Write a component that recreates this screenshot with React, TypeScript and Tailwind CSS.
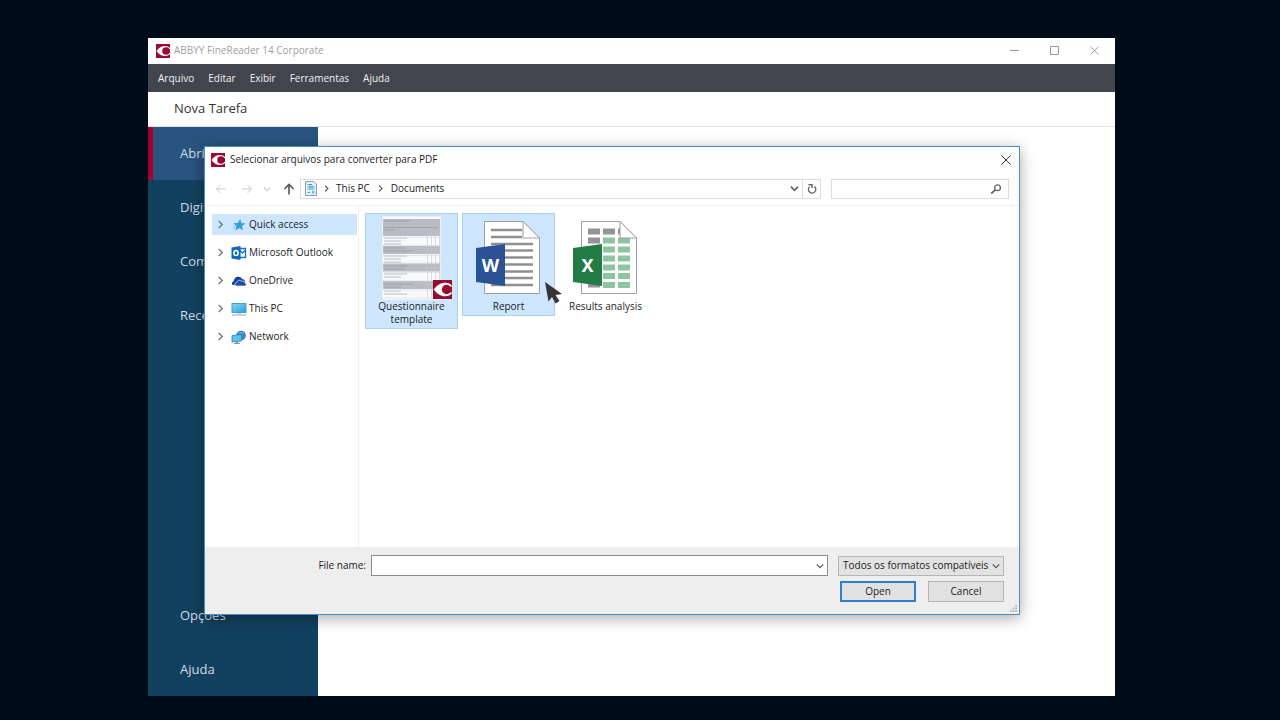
import type { ReactNode } from 'react';

function Logo({ className }: { className: string }) {
  return (
    <svg viewBox="0 0 28 28" className={className} aria-hidden="true">
      <rect width="28" height="28" fill="#980a30" />
      <path d="M1 14C6 7.500 11 4 18 4C22.500 4 25.500 5.500 28 8V20C25.500 22.500 22.500 24 18 24C11 24 6 20.500 1 14Z" fill="#fff" />
      <circle cx="20" cy="14" r="7.500" fill="#980a30" />
      <rect x="22" y="10" width="6" height="8" fill="#980a30" />
    </svg>
  );
}

function Chevron({ className, dir = 'right' }: { className: string; dir?: 'right' | 'down' }) {
  return (
    <svg viewBox="0 0 10 10" className={className} fill="none" stroke="currentColor" strokeWidth="1.500" aria-hidden="true">
      <path d={dir === 'right' ? 'M3 1L7 5L3 9' : 'M1 3L5 7L9 3'} />
    </svg>
  );
}

function Close({ className }: { className: string }) {
  return (
    <svg viewBox="0 0 10 10" className={className} fill="none" stroke="currentColor" aria-hidden="true">
      <path d="M0.500 0.500L9.500 9.500M9.500 0.500L0.500 9.500" />
    </svg>
  );
}

const icon = 'h-4 w-4 shrink-0';

const StarIcon = () => (
  <svg viewBox="0 0 16 16" className={icon} aria-hidden="true">
    <path d="M9.200 2L10.300 6L14.500 6.500L11 9L11.800 13.200L8.300 10.900L4.300 13.400L5.500 9.200L2.500 6.300L6.700 6Z" fill="#2f9fe0" />
    <path d="M2.500 9H5L4.500 10H2.500ZM2.500 11H4.200L3.800 12H2.500Z" fill="#7fc4ee" />
  </svg>
);

const OutlookIcon = () => (
  <svg viewBox="0 0 16 16" className={icon} aria-hidden="true">
    <path d="M8.500 3.500H14.500V12.500H8.500Z" fill="#fff" stroke="#1873c4" strokeWidth="1.400" />
    <path d="M8.500 5L11.500 8L14.500 5" fill="none" stroke="#1873c4" strokeWidth="1.400" />
    <path d="M0.500 2.500L9.500 1V15L0.500 13.500Z" fill="#1168b8" />
    <ellipse cx="5" cy="8" rx="2.100" ry="2.600" fill="none" stroke="#fff" strokeWidth="1.500" />
  </svg>
);

const OneDriveIcon = () => (
  <svg viewBox="0 0 16 16" className={icon} aria-hidden="true">
    <path d="M2 12C0.500 11.500 0.500 8.800 2.800 8.300C2.800 5.500 5 3.500 7.700 3.800C9.500 3.800 10.500 5 11 6C13 6 14 7 14 9V12Z" fill="#173f92" />
    <path d="M5.300 13C3.500 12.500 3.500 10 5.700 9.700C5.900 7.300 9.200 6.300 10.800 8.300C12.700 7.700 14 8.700 14 10C15.800 10.400 15.500 12.700 14.300 13Z" fill="#1a4aa8" stroke="#fff" strokeWidth="0.700" />
  </svg>
);

const PcIcon = () => (
  <svg viewBox="0 0 16 16" className={icon} aria-hidden="true">
    <defs>
      <linearGradient id="screen" x1="0" y1="0" x2="1" y2="1">
        <stop offset="0" stopColor="#8ad5f5" />
        <stop offset="1" stopColor="#2b9ddc" />
      </linearGradient>
    </defs>
    <rect x="1" y="2.500" width="14" height="9" fill="url(#screen)" stroke="#4b9cc8" />
    <path d="M6 12H10V13H6Z" fill="#c4d3dc" />
    <path d="M1 13.500H15V14.500H1Z" fill="#91a7b5" />
  </svg>
);

const NetworkIcon = () => (
  <svg viewBox="0 0 16 16" className={icon} aria-hidden="true">
    <circle cx="10" cy="6.500" r="4.800" fill="#2d7fb8" />
    <path d="M10 3L15 7L10 12Z" fill="#3c86b5" />
    <path d="M7 3.500C9 4.500 11 3 13 4.500" stroke="#84c3e6" fill="none" />
    <path d="M1 6.500L10.500 5.500V12L1 13Z" fill="#5fc0ee" stroke="#2d83b4" strokeWidth="0.800" />
    <path d="M5 13H7V14H5ZM3 14H9V15H3Z" fill="#7d9baf" />
  </svg>
);

const DocumentIcon = () => (
  <svg viewBox="0 0 12 15" className="h-[15px] w-3 shrink-0" aria-hidden="true">
    <path d="M0.500 0.500H9L11.500 3V14.500H0.500Z" fill="#e3f1f9" stroke="#8ba0ad" />
    <path d="M2.500 3.500H7M2.500 6H9.500M2.500 8H9.500M2.500 11.500H5" stroke="#45a3d4" />
    <path d="M4 4.500H8V7H4ZM7 10H9.500V12.500H7Z" fill="#6dbbe0" />
  </svg>
);

function FormPreview() {
  const bands = [4, 10, 31, 48.500, 66];
  const lines = [23, 26, 29, 41, 44, 47, 59, 62, 76, 79];
  return (
    <svg viewBox="-6 -1 82 86" className="h-[86px] w-[82px]" aria-hidden="true">
      <rect x="5" y="1" width="59" height="84" fill="#f8f9fa" stroke="#d6dbe0" strokeWidth="0.600" />
      {bands.map((y, i) => (
        <rect key={y} x="6" y={y} width="57" height={i === 0 ? 6 : i === 1 ? 11 : 8} fill="#b9bcc3" />
      ))}
      <path d="M7 6H33M7 12.500H61M7 15H18M7 33H28M7 36H35M7 51H30M7 54H27M7 69H36M7 72H24" stroke="#949aa3" strokeWidth="0.800" />
      {lines.map((y, i) => (
        <path key={y} d={`M7 ${y}H${i % 3 === 0 ? 30 : 24}`} stroke="#b2b6be" strokeWidth="0.900" />
      ))}
      <path d="M6 30.500H63M6 22.500H63M6 40.500H63M6 48H63M6 57.500H63M6 66H63M6 75H63M6 83H63" stroke="#cfd3d8" strokeWidth="0.500" />
      <path d="M50.500 17V83M54.500 17V83M58.500 17V83M62.500 17V83" stroke="#c3c7cd" strokeWidth="0.600" />
      <svg x="56" y="65" width="19" height="19" viewBox="0 0 28 28">
        <rect width="28" height="28" fill="#980a30" />
        <path d="M1 14C6 7.500 11 4 18 4C22.500 4 25.500 5.500 27.500 8V20C25.500 22.500 22.500 24 18 24C11 24 6 20.500 1 14Z" fill="#fff" />
        <circle cx="20" cy="14" r="7" fill="#980a30" />
        <rect x="22" y="10" width="6" height="8" fill="#980a30" />
      </svg>
    </svg>
  );
}

function Page({ children, fill, letter }: { children: ReactNode; fill: string; letter: string }) {
  return (
    <svg viewBox="0 -1 68 77" className="h-[77px] w-[68px]" aria-hidden="true">
      <path d="M9.500 1.500H48L64.500 18V73.500H9.500Z" fill="#fff" stroke="#9da0a3" />
      {children}
      <path d="M48 1.500V18H64.500Z" fill="#fff" stroke="#9da0a3" />
      <path d="M47.500 1L65 18V1Z" className="fill-none" />
      <path d="M1 28L30 24V66L1 62Z" fill={fill} />
      <text x="15.500" y="51.500" textAnchor="middle" fontSize="18" fontWeight="700" fill="#fff" className="font-['Noto_Sans',sans-serif]">
        {letter}
      </text>
    </svg>
  );
}

function WordIcon() {
  return (
    <Page fill="#2b5294" letter="W">
      <path d="M16 10H47M16 17H47M16 24H58M30 30.500H58M30 37.500H58M30 44.500H58M30 51.500H58M30 58H58M16 65H58" stroke="#8e9092" strokeWidth="2.600" />
    </Page>
  );
}

function ExcelIcon() {
  return (
    <Page fill="#237b45" letter="X">
      <path d="M16 11.500H28M31 11.500H43M46 11.500H48M16 20.500H28M16 64.500H28" stroke="#929496" strokeWidth="6" />
      <path d="M31 20.500H43M46 20.500H58M31 29.500H43M46 29.500H58M31 38.500H43M46 38.500H58M31 47.500H43M46 47.500H58M31 56H43M46 56H58M31 65H43M46 65H58" stroke="#8cc5a0" strokeWidth="6" />
    </Page>
  );
}

const menus = ['Arquivo', 'Editar', 'Exibir', 'Ferramentas', 'Ajuda'];
const places = [
  { name: 'Quick access', Icon: StarIcon },
  { name: 'Microsoft Outlook', Icon: OutlookIcon },
  { name: 'OneDrive', Icon: OneDriveIcon },
  { name: 'This PC', Icon: PcIcon },
  { name: 'Network', Icon: NetworkIcon },
];
const files = [
  { name: 'Questionnaire template', icon: <FormPreview />, selected: true },
  { name: 'Report', icon: <WordIcon />, selected: true },
  { name: 'Results analysis', icon: <ExcelIcon />, selected: false },
];

function Task({ children, active = false }: { children: string; active?: boolean }) {
  return (
    <a
      href="#"
      className={
        active
          ? 'flex h-[53px] items-center border-l-[5px] border-[#a50034] bg-[#28547f] pl-[27px]'
          : 'flex h-[53px] items-center pl-8'
      }
    >
      {children}
    </a>
  );
}

function Toolbar() {
  return (
    <div className="flex h-[34px] items-center border-b border-[#f1f1f1] px-2.5">
      <div className="flex w-[85px] items-center text-[#c9c9c9]">
        <button aria-label="Back" className="mr-3.5 h-3 w-3">
          <svg viewBox="0 0 12 12" className="h-3 w-3" fill="none" stroke="currentColor"><path d="M11 6H1.500M5.500 2L1.500 6L5.500 10" /></svg>
        </button>
        <button aria-label="Forward" className="mr-2.5 h-3 w-3">
          <svg viewBox="0 0 12 12" className="h-3 w-3" fill="none" stroke="currentColor"><path d="M1 6H10.500M6.500 2L10.500 6L6.500 10" /></svg>
        </button>
        <button aria-label="Recent locations" className="mr-3 h-2 w-2">
          <Chevron dir="down" className="h-2 w-2" />
        </button>
        <button aria-label="Up" className="h-3 w-3 text-[#555]">
          <svg viewBox="0 0 12 12" className="h-3 w-3" fill="none" stroke="currentColor" strokeWidth="1.600"><path d="M6 11.500V1.500M1.500 6L6 1.500L10.500 6" /></svg>
        </button>
      </div>
      <div className="mr-2.5 flex h-5 flex-1 items-stretch border border-[#dcdcdc]">
        <div className="flex flex-1 items-center pl-1">
          <DocumentIcon />
          <Chevron className="mx-1.5 h-[7px] w-[7px] text-[#444]" />
          <a href="#">This PC</a>
          <Chevron className="mx-[7px] h-[7px] w-[7px] text-[#444]" />
          <a href="#">Documents</a>
        </div>
        <button aria-label="Previous locations" className="flex w-4 items-center justify-center text-[#666]">
          <Chevron dir="down" className="h-[9px] w-[9px] stroke-2" />
        </button>
        <button aria-label="Refresh" className="flex w-[18px] items-center justify-center border-l border-[#dcdcdc] text-[#666]">
          <svg viewBox="0 0 10 12" className="h-3 w-2.5" fill="none" stroke="currentColor" strokeWidth="1.400">
            <path d="M2.500 3.800A3.700 3.700 0 1 0 7.500 3.600M1.500 1.700H5V5" />
          </svg>
        </button>
      </div>
      <div className="flex h-5 w-[178px] items-center border border-[#dcdcdc] pr-1.5">
        <input aria-label="Search" className="h-full min-w-0 flex-1 px-1 outline-none" />
        <svg viewBox="0 0 12 12" className="h-3 w-3 text-[#666]" fill="none" stroke="currentColor" strokeWidth="1.300" aria-hidden="true">
          <circle cx="7.500" cy="4.700" r="2.900" />
          <path d="M5.400 6.800L1.200 10.500" strokeWidth="1.700" />
        </svg>
      </div>
    </div>
  );
}

function OpenDialog() {
  return (
    <section
      role="dialog"
      aria-label="Selecionar arquivos para converter para PDF"
      className="absolute top-[108px] right-[95px] bottom-[81px] left-14 flex flex-col border border-[#4c8fc4] bg-white text-[10px] leading-[13px] text-[#1c1c1c] shadow-[0_3px_14px_rgba(0,0,0,0.35)]"
    >
      <header className="flex h-[25px] items-center pr-2 pl-1.5">
        <Logo className="mr-[5px] h-3.5 w-3.5" />
        <h2 className="flex-1">Selecionar arquivos para converter para PDF</h2>
        <button aria-label="Close"><Close className="h-2.5 w-2.5 text-[#333]" /></button>
      </header>
      <Toolbar />
      <div className="flex min-h-0 flex-1">
        <nav className="flex w-[154px] shrink-0 flex-col gap-[7px] border-r border-[#f1f1f1] pt-2 pr-px pl-[7px]">
          {places.map(({ name, Icon }, i) => (
            <a
              key={name}
              href="#"
              className={
                i === 0
                  ? 'flex h-[21px] items-center bg-[#cde6fd] pl-1'
                  : 'flex h-[21px] items-center pl-1'
              }
            >
              <Chevron className="mr-1.5 h-[9px] w-[9px] text-[#777]" />
              <Icon />
              <span className="ml-0.5">{name}</span>
            </a>
          ))}
        </nav>
        <ul className="flex flex-1 items-start gap-1 pt-[7px] pl-1.5">
          {files.map(({ name, icon: art, selected }) => (
            <li key={name}>
              <button
                className={
                  selected
                    ? 'flex w-[93px] flex-col items-center border border-[#a5d2f5] bg-[#cde6fd] pb-0.5'
                    : 'flex w-[93px] flex-col items-center border border-transparent pb-0.5'
                }
              >
                <span className="flex h-[86px] items-center">{art}</span>
                <span className="px-2 text-center">{name}</span>
              </button>
            </li>
          ))}
        </ul>
      </div>
      <footer className="relative flex h-[67px] flex-col gap-[5px] bg-[#eee] pt-2 pr-[15px]">
        <div className="flex h-[21px] items-center">
          <label htmlFor="file-name" className="w-[161px] text-right">File name:</label>
          <div className="ml-[5px] flex h-[21px] flex-1 items-center border border-[#8c8c8c] bg-white pr-[3px]">
            <input id="file-name" className="h-full min-w-0 flex-1 px-1 outline-none" />
            <button aria-label="Show file names"><Chevron dir="down" className="h-2 w-2 text-[#555]" /></button>
          </div>
          <div className="relative ml-2.5 w-[166px]">
            <select aria-label="File type" className="block h-5 w-full appearance-none border border-[#b5b5b5] bg-[#e2e2e2] pl-1 outline-none">
              <option>Todos os formatos compatíveis</option>
            </select>
            <Chevron dir="down" className="pointer-events-none absolute top-1.5 right-1 h-2 w-2 text-[#555]" />
          </div>
        </div>
        <div className="flex justify-end gap-3">
          <button className="h-[21px] w-[76px] border-2 border-[#2d80cc] bg-[#e1e1e1]">Open</button>
          <button className="h-[21px] w-[76px] border border-[#b5b5b5] bg-[#e1e1e1]">Cancel</button>
        </div>
        <svg viewBox="0 0 9 9" className="absolute right-0.5 bottom-0.5 h-2 w-2" fill="#b5b5b5" aria-hidden="true">
          <path d="M7 1H9V3H7ZM4 4H6V6H4ZM7 4H9V6H7ZM1 7H3V9H1ZM4 7H6V9H4ZM7 7H9V9H7Z" />
        </svg>
      </footer>
      <svg viewBox="0 0 20 26" className="pointer-events-none absolute top-[134px] left-[339px] h-[26px] w-5" aria-hidden="true">
        <path d="M1 1L18 13L11.500 14L15.500 20L11.500 22.500L8 16L4.500 20.500Z" fill="#353535" />
      </svg>
    </section>
  );
}

export default function App() {
  return (
    <div className="flex min-h-screen bg-[#000d18] pt-[38px] pr-[165px] pb-6 pl-[148px] font-['Open_Sans','Noto_Sans',sans-serif]">
      <div className="relative flex flex-1 flex-col bg-white">
        <header className="flex h-[26px] items-center pr-4 pb-px pl-2 text-[10px] text-[#a0a0a0]">
          <Logo className="mr-1 h-3.5 w-3.5" />
          <h1 className="flex-1">ABBYY FineReader 14 Corporate</h1>
          <div className="flex items-center gap-[31px] text-[#999]">
            <button aria-label="Minimize">
              <svg viewBox="0 0 9 9" className="h-[9px] w-[9px]" stroke="currentColor"><path d="M0 4.500H9" /></svg>
            </button>
            <button aria-label="Maximize">
              <svg viewBox="0 0 9 9" className="h-[9px] w-[9px]" fill="none" stroke="currentColor"><path d="M0.500 0.500H8.500V8.500H0.500Z" /></svg>
            </button>
            <button aria-label="Close window"><Close className="h-[9px] w-[9px]" /></button>
          </div>
        </header>
        <nav className="flex h-7 items-center gap-3.5 bg-[#43454e] pl-2.5 text-[10px] text-[#f0f0f2]">
          {menus.map((m) => (
            <button key={m}>{m}</button>
          ))}
        </nav>
        <div className="flex h-[35px] items-center border-b border-[#e2e4e8] pl-[26px] text-[13px] text-[#333]">Nova Tarefa</div>
        <div className="flex flex-1">
          <nav className="flex w-[170px] flex-col justify-between bg-[#12415f] text-[13px] text-[#cfdde6]">
            <div className="flex flex-col gap-px">
              <Task active>Abrir</Task>
              <Task>Digitalizar</Task>
              <Task>Comparar</Task>
              <Task>Recente</Task>
            </div>
            <div className="flex flex-col gap-px">
              <Task>Opções</Task>
              <Task>Ajuda</Task>
            </div>
          </nav>
          <main className="flex-1" />
        </div>
        <OpenDialog />
      </div>
    </div>
  );
}
